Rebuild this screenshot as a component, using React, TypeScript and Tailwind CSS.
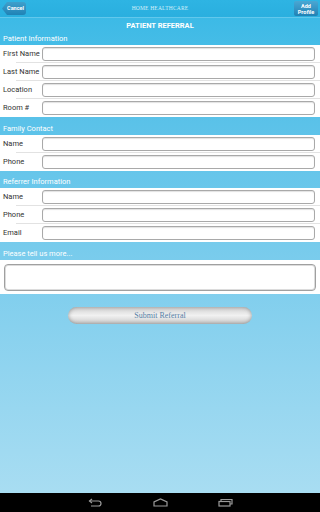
import React from "react";

const sans = "font-['Roboto','Liberation_Sans',sans-serif]";
const serif = "font-['Liberation_Serif','DejaVu_Serif',serif]";

function Field({ label, last }: { label: string; last?: boolean }) {
  return (
    <div className="flex flex-col bg-white">
      <div className="flex h-[17px] items-center">
        <span className={`${sans} w-[42px] shrink-0 pl-[3px] text-[7.5px] leading-none text-[#333]`}>{label}</span>
        <div className="mr-[5px] h-[14px] flex-1 rounded-[3px] border border-[#a9a9a9] bg-white shadow-[inset_0_1px_1px_rgba(0,0,0,0.12)]" />
      </div>
      {last ? <div className="h-px bg-white" /> : <div className="ml-[16px] h-px bg-[#e2e2e2]" />}
    </div>
  );
}

function Band({ title, h }: { title: string; h: string }) {
  return (
    <div className={`flex items-end ${h}`}>
      <span className={`${sans} pl-[3px] text-[7.5px] leading-[12px] text-white`}>{title}</span>
    </div>
  );
}

export default function App() {
  return (
    <div className="flex h-[512px] w-[320px] flex-col overflow-hidden bg-black">
      {/* action bar */}
      <div className="flex h-[17px] shrink-0 items-center justify-between bg-linear-to-b from-[#2eb4e3] to-[#2aafdf] px-[2px]">
        <button className="flex h-[13px] w-[24px] items-center justify-center bg-linear-to-b from-[#3f9fcb] to-[#1f83b6] pl-[3px] [clip-path:polygon(5px_0,100%_0,100%_100%,5px_100%,0_50%)] rounded-r-[3px]">
          <span className={`${sans} text-[5.5px] font-bold leading-none text-white`}>Cancel</span>
        </button>
        <span className={`${serif} text-[5.5px] uppercase tracking-[0.2px] text-[#d4f0fa]`}>Home Healthcare</span>
        <button className="flex h-[15px] w-[24px] flex-col items-center justify-center rounded-[2px] bg-linear-to-b from-[#4aa7d3] to-[#1f82b5]">
          <span className={`${sans} text-[5.5px] font-bold leading-[6px] text-white`}>Add</span>
          <span className={`${sans} text-[5.5px] font-bold leading-[6px] text-white`}>Profile</span>
        </button>
      </div>

      <div className="flex flex-1 flex-col bg-linear-to-b from-[#3cbae6] to-[#a8ddf2]">
        <div className="h-px bg-[#62c8ec]" />
        <div className="flex h-[15px] items-center justify-center">
          <span className={`${sans} text-[7.5px] font-bold leading-none text-white`}>PATIENT REFERRAL</span>
        </div>

        <Band title="Patient Information" h="h-[12px]" />
        <Field label="First Name" />
        <Field label="Last Name" />
        <Field label="Location" />
        <Field label="Room #" last />

        <Band title="Family Contact" h="h-[18px]" />
        <Field label="Name" />
        <Field label="Phone" last />

        <Band title="Referrer Information" h="h-[17px]" />
        <Field label="Name" />
        <Field label="Phone" />
        <Field label="Email" last />

        <Band title="Please tell us more..." h="h-[18px]" />
        <div className="flex h-[34px] items-center bg-white px-[4px]">
          <div className="h-[27px] flex-1 rounded-[4px] border border-[#a0a0a0] bg-white shadow-[inset_0_0_0_1px_#dcdcdc]" />
        </div>

        <div className="flex justify-center pt-[13px]">
          <button className="flex h-[17px] w-[184px] items-center justify-center rounded-full bg-linear-to-b from-[#d2d2d2] via-[#f1f1f1] to-[#cbcbcb] shadow-[inset_0_0_4px_rgba(0,0,0,0.35)]">
            <span className={`${serif} text-[8px] leading-none text-[#5580a6]`}>Submit Referral</span>
          </button>
        </div>
      </div>

      {/* system nav */}
      <div className="flex h-[19px] shrink-0 items-center justify-center gap-[50px] bg-black">
        <svg width="15" height="9" viewBox="0 0 15 9" fill="none" stroke="#9a9a9a" strokeWidth="1.2">
          <path d="M4 1 L1.5 3 L4 5" />
          <path d="M1.5 3 H10.5 A2.5 2.5 0 0 1 10.5 8 H3" />
        </svg>
        <svg width="15" height="9" viewBox="0 0 15 9" fill="none" stroke="#9a9a9a" strokeWidth="1.2">
          <path d="M1 8 V4 L7.5 1 L14 4 V8 Z" />
        </svg>
        <svg width="15" height="9" viewBox="0 0 15 9" fill="none" stroke="#9a9a9a" strokeWidth="1.2">
          <rect x="1" y="3.5" width="11" height="4.5" />
          <path d="M3 3.5 V1.5 H14 V6 H12" />
        </svg>
      </div>
    </div>
  );
}
